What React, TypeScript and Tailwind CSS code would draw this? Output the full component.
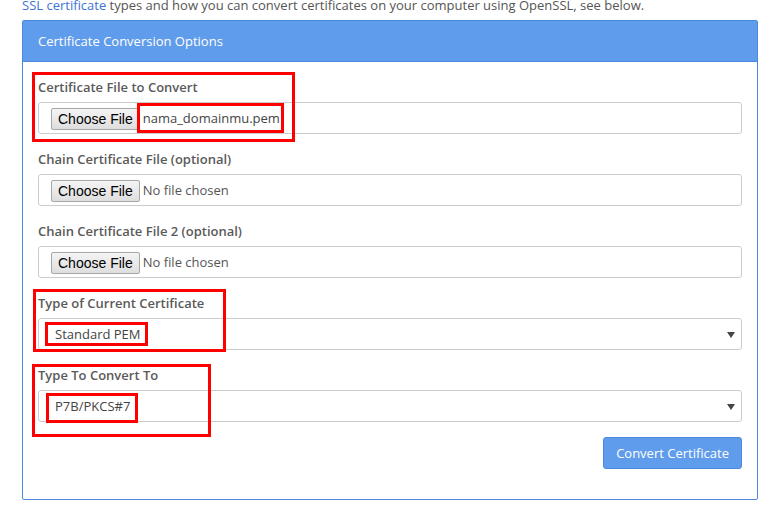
import React from 'react';

const font = { fontFamily: '"Open Sans", "Liberation Sans", sans-serif' };

function Arrow() {
  return (
    <svg width="8" height="6" viewBox="0 0 8 6" className="shrink-0">
      <path d="M0 0 L8 0 L4 6 Z" fill="#444" />
    </svg>
  );
}

function FileInput({ value, muted }: { value: string; muted?: boolean }) {
  return (
    <div className="flex h-[32px] items-center rounded-[3px] border border-[#ccc] bg-white pl-[12px] pt-[2px]">
      <span className="flex h-[22px] items-center rounded-[2px] border border-[#a6a6a6] bg-gradient-to-b from-[#f4f4f4] to-[#dedede] px-[6px] text-[14px] text-black [font-family:'Liberation_Sans',Arial,sans-serif]">
        Choose File
      </span>
      <span className={`ml-[3px] text-[13px] ${muted ? 'text-[#555]' : 'text-[#444]'}`}>{value}</span>
    </div>
  );
}

function Select({ value }: { value: string }) {
  return (
    <div className="flex h-[32px] items-center justify-between rounded-[3px] border border-[#ccc] bg-white pl-[16px] pr-[6px] pt-[2px]">
      <span className="text-[13px] text-[#444]">{value}</span>
      <Arrow />
    </div>
  );
}

function Field({ label, children }: { label: string; children: React.ReactNode }) {
  return (
    <div className="mb-[15px]">
      <label className="mb-[5px] block text-[13px] font-semibold leading-[20px] text-[#5a5a5a]">{label}</label>
      {children}
    </div>
  );
}

export default function App() {
  const redBoxes = [
    'left-[32px] top-[72px] w-[263px] h-[70px]',
    'left-[137px] top-[103px] w-[147px] h-[30px]',
    'left-[33px] top-[289px] w-[193px] h-[63px]',
    'left-[45px] top-[322px] w-[103px] h-[24px]',
    'left-[32px] top-[364px] w-[179px] h-[73px]',
    'left-[46px] top-[393px] w-[92px] h-[30px]',
  ];

  return (
    <div className="relative h-[527px] w-[779px] overflow-hidden bg-white text-[#555]" style={font}>
      <p className="-mt-[5px] pl-[22px] text-[13px] leading-[20px] text-[#555]">
        <span className="text-[#3d74d6]">SSL certificate</span> types and how you can convert certificates on your computer using OpenSSL, see below.
      </p>

      <div className="mt-[5px] ml-[22px] w-[736px] rounded-[2px] border border-[#4a89dc]">
        <div className="flex h-[41px] items-center border-b border-[#4a89dc] bg-[#5f9ceb] px-[15px] pt-[1px] text-[13px] text-white">
          Certificate Conversion Options
        </div>
        <div className="p-[15px]">
          <Field label="Certificate File to Convert">
            <FileInput value="nama_domainmu.pem" />
          </Field>
          <Field label="Chain Certificate File (optional)">
            <FileInput value="No file chosen" muted />
          </Field>
          <Field label="Chain Certificate File 2 (optional)">
            <FileInput value="No file chosen" muted />
          </Field>
          <Field label="Type of Current Certificate">
            <Select value="Standard PEM" />
          </Field>
          <Field label="Type To Convert To">
            <Select value="P7B/PKCS#7" />
          </Field>
          <div className="mb-[15px] flex justify-end">
            <button className="h-[32px] rounded-[3px] border border-[#4a89dc] bg-[#5f9ceb] px-[12px] pt-[1px] text-[13px] text-white">
              Convert Certificate
            </button>
          </div>
        </div>
      </div>

      {redBoxes.map((c) => (
        <div key={c} className={`pointer-events-none absolute border-[3px] border-[#ff0000] ${c}`} />
      ))}
    </div>
  );
}
